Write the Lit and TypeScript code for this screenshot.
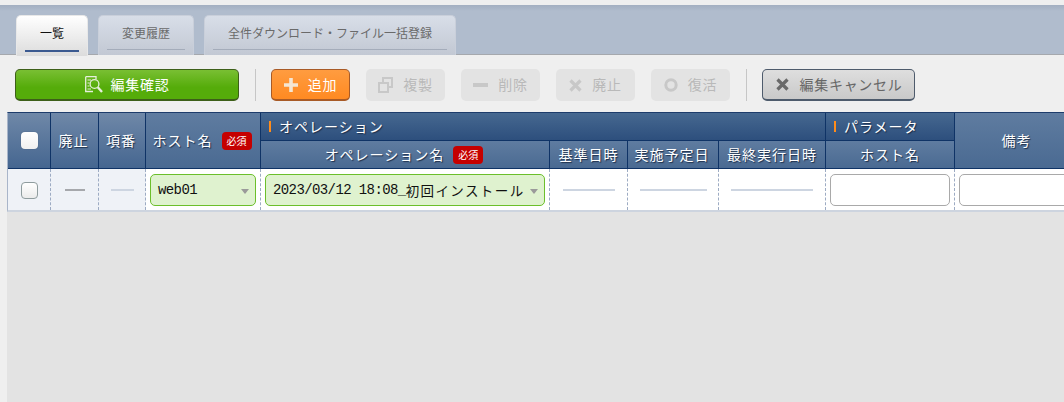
import { LitElement, html, css } from "lit";
import { customElement } from "lit/decorators.js";

const iconPreview = html`<svg class="ic" width="18" height="17" viewBox="0 0 18 17" fill="none" stroke="#e6efdc" stroke-width="1.3">
  <path d="M.7.7H11V3M.7.7V15.5H8"/><path d="M2.5 4H6M2.5 7H4.5M2.5 10H4.5M2.5 13H6" stroke-width="1"/>
  <circle cx="9.5" cy="8" r="4.4"/><path d="M12.8 11.3L17 16" stroke-width="2.4"/></svg>`;
const iconPlus = html`<svg class="ic" width="14" height="14" viewBox="0 0 14 14"><path d="M5.2 0H8.8V5.2H14V8.8H8.8V14H5.2V8.8H0V5.2H5.2Z" fill="#f4e6d4"/></svg>`;
const iconCopy = html`<svg class="ic" width="15" height="16" viewBox="0 0 15 16" fill="none" stroke="#c8c8c8" stroke-width="2"><path d="M5 5V1H14V10H10"/><rect x="1" y="6" width="9" height="9"/></svg>`;
const iconMinus = html`<svg class="ic" width="15" height="4" viewBox="0 0 15 4"><rect width="15" height="4" fill="#c8c8c8"/></svg>`;
const iconX = (c: string) => html`<svg class="ic" width="13" height="13" viewBox="0 0 13 13"><path d="M1.5 1.5L11.5 11.5M11.5 1.5L1.5 11.5" stroke="${c}" stroke-width="3.2" fill="none"/></svg>`;
const iconO = html`<svg class="ic" width="14" height="14" viewBox="0 0 14 14"><circle cx="7" cy="7" r="5.2" fill="none" stroke="#c8c8c8" stroke-width="3"/></svg>`;

@customElement("app-root")
export class AppRoot extends LitElement {
  static styles = css`
    :host { display: block; width: 1064px; height: 402px; overflow: hidden; background: #efefef;
      font-family: "Noto Sans CJK JP", "Liberation Sans", sans-serif; }
    .page { display: flex; flex-direction: column; height: 402px; padding-top: 5px; box-sizing: border-box; }
    .tabs { height: 50px; box-sizing: border-box; flex: none; display: flex; gap: 10px; padding: 10px 0 0 16px;
      background: linear-gradient(#a3afc1, #b0bccd 6px); border-bottom: 1px solid #a5a8ad; }
    .tab { height: 40px; box-sizing: border-box; padding: 0 8px; border-radius: 5px 5px 0 0; display: flex; flex-direction: column;
      background: linear-gradient(#d8dee8, #c2c8d3); border: 1px solid #c9cfda; border-bottom: 0; font-size: 12px; color: #6a6a6a; }
    .tab span { flex: 1; display: flex; align-items: center; justify-content: center; line-height: 1; }
    .tab i { display: block; height: 1px; background: #a4acba; margin-bottom: 5px; }
    .tab.on { background: linear-gradient(#ffffff, #f6f6f6 25%, #dcdcdc); border-color: #e8e8e8; color: #111; height: 41px; margin-bottom: -1px; position: relative; }
    .tab.on i { height: 2px; background: #3b5a90; margin-bottom: 4px; }
    .t1 { width: 72px; } .t2 { width: 96px; } .t3 { width: 252px; }
    .bar { flex: none; height: 57px; box-sizing: border-box; padding: 14px 0 0 15px; display: flex; align-items: flex-start; }
    .btn { height: 32px; box-sizing: border-box; width: 79px; margin-right: 16px; flex: none; display: flex; align-items: center; justify-content: center;
      gap: 10px; font-size: 14px; letter-spacing: .7px; border-radius: 5px; background: #e3e3e3; color: #b9b9b9; line-height: 1; }
    .btn span { padding-bottom: 2px; }
    .go { width: 224px; color: #fff; border: 1px solid #3d5f19; border-bottom-width: 2px; gap: 8px;
      background: linear-gradient(#79bf33, #55ac0a 60%); }
    .add { color: #fff; border: 1px solid #a85a26; border-bottom-width: 2px; background: linear-gradient(#ff9c40, #ff8a22); margin-left: 15px; width: 79px; }
    .cancel { width: 153px; color: #666; border: 1px solid #4e5b6c; border-bottom-width: 2px; background: linear-gradient(#dedede, #c9c9c9); margin: 0 0 0 15px; gap: 11px; padding-left: 1px; }
    .sep { width: 1px; height: 32px; background: #c6c6c6; flex: none; }
    .ic { flex: none; display: block; }
    .content { flex: 1; margin-left: 7px; background: #e3e3e3; min-height: 0; }
    .grid { display: grid; width: 1057px; overflow: hidden; border-left: 1px solid #a9b5c9; border-top: 1px solid #1d3c6b;
      grid-template-columns: 43px 48px 47px 115px 289px 78px 91px 107px 129px 130px;
      grid-template-rows: 28px 28px 41px; border-bottom: 2px solid #cdd4df; }
    .h { box-sizing: border-box; display: flex; align-items: center; justify-content: center; gap: 9px; padding-bottom: 2px;
      border-right: 1px solid #0f3366; border-bottom: 1px solid #0f3366; color: #fff; font-size: 14px; letter-spacing: 1px;
      text-shadow: 1px 1px 1px #1d2f4a; background: linear-gradient(#5f7ca0, #4a6a92); line-height: 1; white-space: nowrap; }
    .tall { grid-row: span 2; background: linear-gradient(#6f88a8, #456690); }
    .tall.plain { background: linear-gradient(#5f7ca0, #4a6a92); }
    .nudge { padding-right: 2px; }
    .far { padding-right: 6px; }
    .group { justify-content: flex-start; padding-left: 8px; gap: 8px; background: linear-gradient(#466890, #2d4f7d); }
    .group b { display: block; width: 2px; height: 11px; background: #ff8c1a; flex: none; margin-top: 2px; }
    .wide { grid-column: span 4; }
    .req { display: inline-block; width: 30px; height: 18px; line-height: 18px; text-align: center; border-radius: 4px;
      background: #c50000; color: #fff; font-size: 10px; letter-spacing: 0; text-shadow: none; flex: none; margin-top: 2px; }
    .cb { box-sizing: border-box; width: 17px; height: 17px; border-radius: 4px; background: linear-gradient(#fff, #ebebeb); }
    .h .cb { background: linear-gradient(#fff, #f0f0f0); box-shadow: 0 0 1px #33465f; margin-top: 2px; }
    .d { box-sizing: border-box; background: #fff; border-right: 1px dashed #9dabc3; display: flex; align-items: center; justify-content: center; padding-top: 1px; }
    .d.sh { background: #eff2f7; }
    .d .cb { border: 1px solid #8f9c9e; }
    .dash { display: block; height: 2px; background: #cdd5e1; }
    .dash.dk { background: #a6a8ac; }
    .sel, .inp { box-sizing: border-box; height: 32px; border-radius: 5px; margin: 0 4px; flex: 1; min-width: 0; }
    .sel { border: 1px solid #6cbf2b; background: #dff2cf; display: flex; align-items: center; padding-left: 7px; position: relative;
      font-family: "Liberation Mono", "Noto Sans CJK JP", monospace; font-size: 14px; letter-spacing: -.6px; color: #111; white-space: nowrap; }
    .sel .jp { letter-spacing: 1.4px; font-size: 13.5px; font-family: "Noto Sans CJK JP", sans-serif; }
    .sel::after { content: ""; position: absolute; right: 6px; top: 14px; border: 4px solid transparent; border-top: 5px solid #9a9a9a; border-bottom: 0; }
    .inp { border: 1px solid #a9a9a9; background: #fff; }
  `;

  render() {
    const d = (w: number, dk = false) => html`<span class="dash ${dk ? "dk" : ""}" style="width:${w}px"></span>`;
    return html`<div class="page">
      <div class="tabs">
        <div class="tab on t1"><span>一覧</span><i></i></div>
        <div class="tab t2"><span>変更履歴</span><i></i></div>
        <div class="tab t3"><span>全件ダウンロード・ファイル一括登録</span><i></i></div>
      </div>
      <div class="bar">
        <div class="btn go">${iconPreview}<span>編集確認</span></div>
        <div class="sep"></div>
        <div class="btn add">${iconPlus}<span>追加</span></div>
        <div class="btn">${iconCopy}<span>複製</span></div>
        <div class="btn">${iconMinus}<span>削除</span></div>
        <div class="btn">${iconX("#c8c8c8")}<span>廃止</span></div>
        <div class="btn">${iconO}<span>復活</span></div>
        <div class="sep"></div>
        <div class="btn cancel">${iconX("#6a6a6a")}<span>編集キャンセル</span></div>
      </div>
      <div class="content">
        <div class="grid">
          <div class="h tall"><div class="cb"></div></div>
          <div class="h tall nudge">廃止</div>
          <div class="h tall nudge">項番</div>
          <div class="h tall plain nudge">ホスト名<span class="req">必須</span></div>
          <div class="h group wide"><b></b>オペレーション</div>
          <div class="h group"><b></b>パラメータ</div>
          <div class="h tall plain far">備考</div>
          <div class="h nudge">オペレーション名<span class="req">必須</span></div>
          <div class="h">基準日時</div>
          <div class="h nudge">実施予定日</div>
          <div class="h">最終実行日時</div>
          <div class="h">ホスト名</div>
          <div class="d sh"><div class="cb"></div></div>
          <div class="d sh">${d(20, true)}</div>
          <div class="d sh">${d(23)}</div>
          <div class="d"><div class="sel">web01</div></div>
          <div class="d"><div class="sel">2023/03/12 18:08_<span class="jp">初回インストール</span></div></div>
          <div class="d">${d(52)}</div>
          <div class="d">${d(67)}</div>
          <div class="d">${d(82)}</div>
          <div class="d"><div class="inp"></div></div>
          <div class="d"><div class="inp"></div></div>
        </div>
      </div>
    </div>`;
  }
}
